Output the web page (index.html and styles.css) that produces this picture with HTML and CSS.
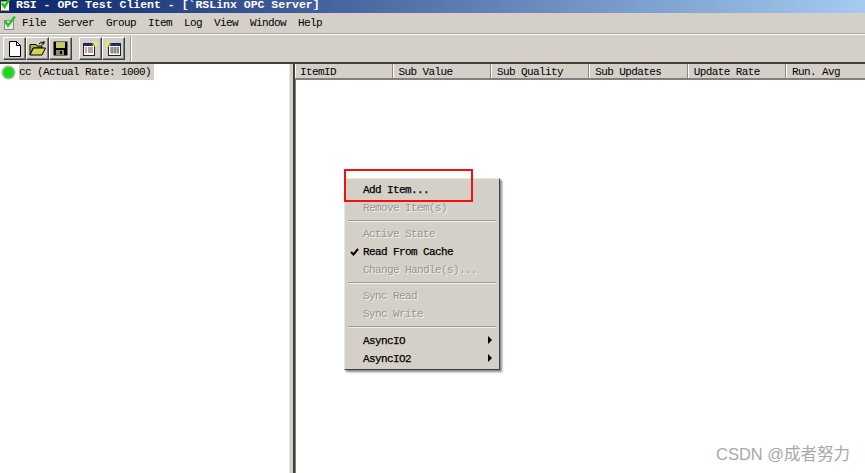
FILE: index.html
```html
<!DOCTYPE html>
<html lang="en">
<head>
<meta charset="utf-8">
<title>RSI - OPC Test Client</title>
<link rel="stylesheet" href="styles.css">
</head>
<body>
<div class="app">
  <header class="titlebar">
    <svg class="title-icon" width="13" height="13" viewBox="0 0 13 13"><rect x="0.5" y="2" width="9" height="10" fill="#fff" stroke="#333"/><path d="M2 4l2.500 4 5-8" fill="none" stroke="#18c818" stroke-width="2.500"/></svg>
    <span class="title-text">RSI - OPC Test Client - [`RSLinx OPC Server]</span>
  </header>
  <nav class="menubar">
    <svg class="menu-icon" width="14" height="14" viewBox="0 0 14 14"><rect x="1.500" y="4.500" width="9" height="9" fill="#e8e8e4" stroke="#8a8a8a"/><path d="M2 5l3 4.500 7-9" fill="none" stroke="#1fc41f" stroke-width="2.400"/></svg>
    <span>File</span><span>Server</span><span>Group</span><span>Item</span><span>Log</span><span>View</span><span>Window</span><span>Help</span>
  </nav>
  <div class="toolbar">
    <div class="tool-group">
      <button class="tool"><svg width="14" height="16" viewBox="0 0 14 16"><path d="M1.500.5h7l4 4v11h-11z" fill="#fff" stroke="#000"/><path d="M8.500.5v4h4" fill="none" stroke="#000"/></svg></button>
      <button class="tool"><svg width="18" height="15" viewBox="0 0 18 15"><path d="M1 3.500h6l1 1.500h5v2H4L1 14z" fill="#b8b43c" stroke="#000"/><path d="M1 14l3.500-7h12L13 14z" fill="#d8d24e" stroke="#000"/><path d="M10 3q2-3 5-1.500M15 0v3h-3" fill="none" stroke="#000"/></svg></button>
      <button class="tool"><svg width="15" height="15" viewBox="0 0 15 15"><rect x=".5" y=".5" width="14" height="14" fill="#000"/><rect x="3" y="1" width="9" height="6" fill="#c8c46a"/><rect x="3" y="9" width="8" height="5" fill="#8a8a60"/><rect x="7" y="10" width="2" height="3" fill="#000"/></svg></button>
    </div>
    <div class="tool-group">
      <button class="tool"><svg width="17" height="15" viewBox="0 0 17 15"><rect x="1.500" y="2.500" width="11" height="12" fill="#fff" stroke="#223"/><rect x="2" y="3" width="10" height="2" fill="#1c2f7a"/><path d="M3 7h2M3 9h2M3 11h2" stroke="#c33"/><path d="M6 7h5M6 9h5M6 11h5" stroke="#555"/><path d="M13 0v6M10 3h6M11 1l4 4M15 1l-4 4" stroke="#f4ee50"/></svg></button>
      <button class="tool"><svg width="17" height="15" viewBox="0 0 17 15"><rect x="3.500" y="2.500" width="12" height="12" fill="#fff" stroke="#223"/><rect x="4" y="3" width="11" height="2" fill="#1c2f7a"/><path d="M5 7h9M5 9h9M5 11h9M7 6v7M10 6v7M13 6v7" stroke="#666"/><path d="M3 0v6M0 3h6M1 1l4 4M5 1l-4 4" stroke="#f4ee50"/></svg></button>
    </div>
    <div class="tool-sep"></div>
  </div>
  <main class="panes">
    <section class="tree">
      <div class="tree-row">
        <svg class="led" width="15" height="15" viewBox="0 0 15 15"><circle cx="7.500" cy="7.500" r="7" fill="#b4b4ae"/><circle cx="7.500" cy="7.500" r="5.400" fill="#10e010"/></svg>
        <span class="tree-label">cc (Actual Rate: 1000)</span>
      </div>
    </section>
    <div class="splitter"></div>
    <section class="list">
      <div class="list-header">
        <div class="col">ItemID</div>
        <div class="col">Sub Value</div>
        <div class="col">Sub Quality</div>
        <div class="col">Sub Updates</div>
        <div class="col">Update Rate</div>
        <div class="col">Run. Avg</div>
      </div>
    </section>
  </main>

  <div class="menu">
    <div class="item">Add Item...</div>
    <div class="item off">Remove Item(s)</div>
    <div class="sep"></div>
    <div class="item off">Active State</div>
    <div class="item"><svg class="check" width="9" height="8" viewBox="0 0 9 8"><path d="M1 4l2.500 2.500L8 1" fill="none" stroke="#000" stroke-width="2"/></svg>Read From Cache</div>
    <div class="item off">Change Handle(s)...</div>
    <div class="sep"></div>
    <div class="item off">Sync Read</div>
    <div class="item off">Sync Write</div>
    <div class="sep sep-last"></div>
    <div class="item sub">AsyncIO<i class="arrow"></i></div>
    <div class="item sub">AsyncIO2<i class="arrow"></i></div>
  </div>
  <div class="redbox"></div>
  <div class="watermark">CSDN @成者努力</div>
</div>
</body>
</html>
```
FILE: styles.css
```css
* { box-sizing: border-box; }
html, body { margin: 0; padding: 0; }
body { background: #fff; }
.app {
  position: relative;
  width: 865px;
  height: 473px;
  overflow: hidden;
  display: flex;
  flex-direction: column;
  background: #d4d0c8;
  font: 11px/12px "Liberation Mono", monospace;
  letter-spacing: -.6px;
  color: #000;
}
.titlebar {
  height: 13px;
  flex: none;
  display: flex;
  overflow: hidden;
  background: linear-gradient(90deg, #0a246a 0, #a6caf0 100%);
  color: #fff;
}
.title-icon { flex: none; margin: -1px 3px 0 0; }
.title-text {
  font-weight: 700;
  font-size: 11.500px;
  line-height: 10px;
  letter-spacing: 0;
  white-space: pre;
}
.menubar {
  height: 21px;
  flex: none;
  display: flex;
  align-items: center;
  gap: 12px;
  border-bottom: 1px solid #a9a69e;
}
.menu-icon { flex: none; margin: 0 -7px 0 3px; }
.toolbar {
  height: 30px;
  flex: none;
  display: flex;
  align-items: center;
  padding-left: 3px;
  gap: 7px;
  border-top: 1px solid #fff;
  border-bottom: 2px solid #404040;
}
.tool-group { display: flex; gap: 0; }
.tool {
  width: 23px;
  height: 23px;
  padding: 0;
  display: flex;
  align-items: center;
  justify-content: center;
  background: #d4d0c8;
  border: 1px solid;
  border-color: #fff #404040 #404040 #fff;
  box-shadow: inset -1px -1px 0 #808080;
}
.tool-sep {
  align-self: stretch;
  width: 2px;
  margin-left: -2px;
  border-left: 1px solid #a09d96;
  border-right: 1px solid #fff;
}
.panes { flex: 1; display: flex; min-height: 0; }
.tree { width: 289px; flex: none; background: #fff; }
.tree-row { display: flex; height: 16px; align-items: center; padding-left: 1px; }
.led { flex: none; }
.tree-label {
  margin-left: 3px;
  padding: 0 3px 0 0;
  height: 16px;
  line-height: 16px;
  background: #d4d0c8;
  white-space: pre;
}
.splitter {
  width: 4px;
  flex: none;
  background: #d4d0c8;
  border-left: 1px solid #e8e6e0;
}
.list {
  flex: 1;
  background: #fff;
  border-left: 2px solid #404040;
  box-shadow: inset 1px 0 0 #808080;
  min-width: 0;
}
.list-header { display: flex; height: 16px; background: #808080; padding-bottom: 2px; }
.col {
  flex: none;
  width: 98.400px;
  height: 14px;
  line-height: 16px;
  padding-left: 5px;
  background: #d4d0c8;
  border-left: 1px solid #fff;
  border-right: 1px solid #8a8a84;
  white-space: pre;
}
.col:first-child { width: 97.500px; padding-left: 4px; }
.menu {
  position: absolute;
  left: 344px;
  top: 178px;
  width: 156px;
  height: 192px;
  padding: 2px 3px;
  background: #d4d0c8;
  border: 1px solid;
  border-color: #e8e6e0 #404040 #404040 #e8e6e0;
  box-shadow: 2px 2px 2px rgba(70, 70, 70, .65);
}
.item {
  position: relative;
  height: 18px;
  line-height: 18px;
  padding-left: 15px;
  -webkit-text-stroke: .25px #000;
  white-space: pre;
}
.off { color: #98958e; -webkit-text-stroke: 0; text-shadow: 1px 1px 0 #f4f2ee; }
.check { position: absolute; left: 2px; top: 5px; }
.sep {
  height: 2px;
  margin: 3px 0;
  background: #a09d96;
  border-bottom: 1px solid #f0eee8;
}
.sep-last { margin-bottom: 4px; }
.arrow {
  position: absolute;
  right: 4px;
  top: 4px;
  width: 0;
  height: 0;
  border: 4px solid transparent;
  border-left-color: #000;
  border-right-width: 0;
}
.redbox {
  position: absolute;
  left: 344px;
  top: 169px;
  width: 129px;
  height: 33px;
  border: 2px solid #f01010;
}
.watermark {
  position: absolute;
  left: 716px;
  top: 444px;
  font: 16.500px/20px "Liberation Sans", "Noto Sans CJK SC", sans-serif;
  letter-spacing: 0;
  color: #a8a8a8;
  white-space: pre;
}
```
